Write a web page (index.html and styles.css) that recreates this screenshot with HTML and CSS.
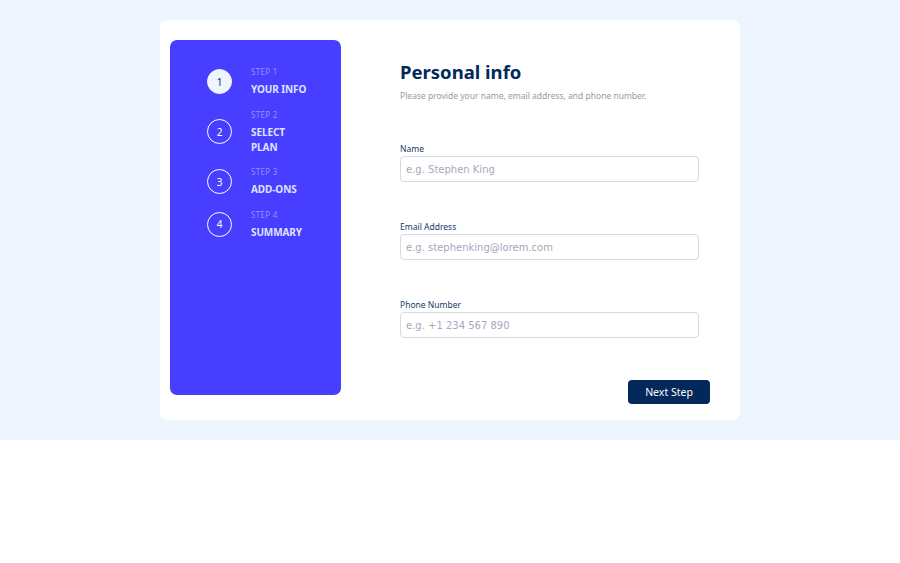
FILE: index.html
```html
<!DOCTYPE html>
<html lang="en">
<head>
<meta charset="utf-8">
<title>Multi-step form</title>
<link rel="stylesheet" href="styles.css">
</head>
<body>
<div class="page">
  <div class="card">
    <aside class="sidebar">
      <div class="step">
        <div class="num active">1</div>
        <div class="step-text">
          <div class="step-label">STEP 1</div>
          <div class="step-name">YOUR INFO</div>
        </div>
      </div>
      <div class="step">
        <div class="num">2</div>
        <div class="step-text">
          <div class="step-label">STEP 2</div>
          <div class="step-name">SELECT PLAN</div>
        </div>
      </div>
      <div class="step">
        <div class="num">3</div>
        <div class="step-text">
          <div class="step-label">STEP 3</div>
          <div class="step-name">ADD-ONS</div>
        </div>
      </div>
      <div class="step">
        <div class="num">4</div>
        <div class="step-text">
          <div class="step-label">STEP 4</div>
          <div class="step-name">SUMMARY</div>
        </div>
      </div>
    </aside>
    <main class="main">
      <h1 class="title">Personal info</h1>
      <p class="subtitle">Please provide your name, email address, and phone number.</p>
      <div class="fields">
        <div class="field">
          <label class="label">Name</label>
          <input class="input" type="text" placeholder="e.g. Stephen King">
        </div>
        <div class="field">
          <label class="label">Email Address</label>
          <input class="input" type="text" placeholder="e.g. stephenking@lorem.com">
        </div>
        <div class="field">
          <label class="label">Phone Number</label>
          <input class="input" type="text" placeholder="e.g. +1 234 567 890">
        </div>
      </div>
      <div class="actions">
        <button class="next">Next Step</button>
      </div>
    </main>
  </div>
</div>
</body>
</html>
```
FILE: styles.css
```css
* { box-sizing: border-box; }
html, body { margin: 0; padding: 0; background: #ffffff; }
body { font-family: "Noto Sans", "Open Sans", sans-serif; }
.page {
  background: #eff5ff;
  padding: 20px 0;
  display: flex;
  justify-content: center;
}
.card {
  width: 580px;
  height: 400px;
  background: #ffffff;
  border-radius: 8px;
  padding: 20px 30px 0 10px;
  display: flex;
}
.sidebar {
  width: 171px;
  height: 355px;
  background: #483eff;
  border-radius: 7px;
  padding: 26px 0 0 37px;
  display: flex;
  flex-direction: column;
  gap: 11.5px;
}
.step {
  display: flex;
  align-items: center;
  gap: 19px;
}
.num {
  width: 25px;
  height: 25px;
  border-radius: 50%;
  border: 1px solid #ffffff;
  color: #ffffff;
  font-size: 10px;
  display: flex;
  align-items: center;
  justify-content: center;
  flex-shrink: 0;
}
.num.active {
  background: #eef5ff;
  border-color: #eef5ff;
  color: #02295a;
}
.step-text { width: 62px; }
.step-label {
  font-size: 8px;
  line-height: 12px;
  color: #948fff;
  letter-spacing: 0.3px;
}
.step-name {
  margin-top: 4px;
  font-size: 10px;
  line-height: 15px;
  font-weight: 700;
  color: #dfe2ff;
  letter-spacing: -0.1px;
}
.main {
  flex: 1;
  margin-left: 59px;
  display: flex;
  flex-direction: column;
}
.title {
  margin: 20px 0 0;
  font-size: 18.5px;
  line-height: 24px;
  font-weight: 700;
  color: #02295a;
}
.subtitle {
  margin: 5px 0 0;
  font-size: 8.5px;
  line-height: 14px;
  color: #9699ab;
}
.fields {
  margin-top: 40px;
  display: flex;
  flex-direction: column;
  gap: 39px;
  width: 299px;
}
.field { display: flex; flex-direction: column; }
.label {
  font-size: 8.5px;
  line-height: 12px;
  color: #163a6b;
  margin-bottom: 1px;
}
.input {
  height: 26px;
  border: 1px solid #d6d9e6;
  border-radius: 4px;
  padding: 0 5px;
  font-family: "DejaVu Sans", sans-serif;
  font-size: 10px;
  color: #02295a;
  outline: none;
}
.input::placeholder { color: #a5a9bb; }
.actions {
  margin-top: 42px;
  display: flex;
  justify-content: flex-end;
}
.next {
  width: 82px;
  height: 24px;
  border: none;
  border-radius: 4px;
  background: #02295a;
  color: #ffffff;
  font-family: "Noto Sans", "Open Sans", sans-serif;
  font-size: 10.5px;
}
```
